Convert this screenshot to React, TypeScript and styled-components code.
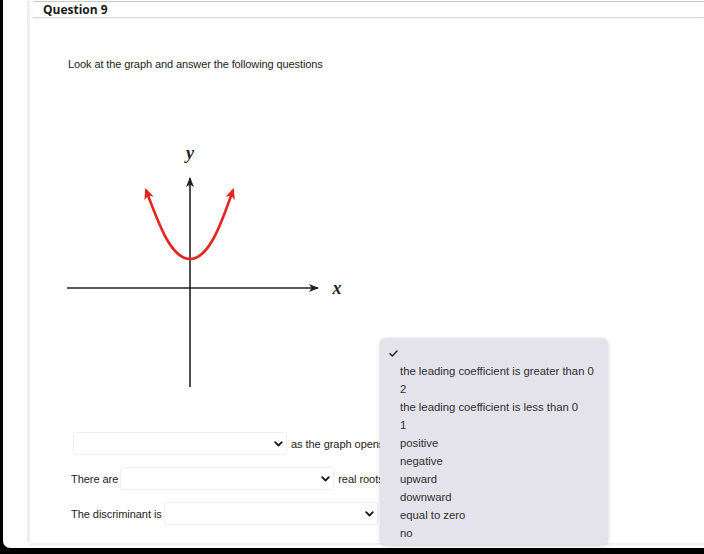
import React from "react";
import styled, { createGlobalStyle } from "styled-components";

const GlobalStyle = createGlobalStyle`
  html, body { margin: 0; padding: 0; background: #000; }
  body { width: 704px; height: 554px; overflow: hidden; }
  * { box-sizing: border-box; }
`;

const Screen = styled.div`
  position: relative;
  margin-left: 3px;
  width: 701px;
  height: 548px;
  background: #fff;
  border-bottom-left-radius: 7px;
  display: flex;
  overflow: hidden;
  padding-top: 1px;
`;

const Gutter = styled.div`
  width: 27px;
  flex: none;
  border-right: 3px solid #efefef;
  margin-bottom: 6px;
`;

const Main = styled.div`
  flex: 1;
  display: flex;
  flex-direction: column;
  border-bottom: 2px solid #f1f1f1;
  margin-bottom: 3px;
`;

const Header = styled.div`
  margin-left: 3px;
  height: 17px;
  border-top: 1px solid #c9c9c9;
  border-bottom: 1px solid #d6d6d6;
  box-shadow: 0 2px 3px rgba(0, 0, 0, 0.04);
  padding-left: 10px;
  display: flex;
  align-items: center;
  font-family: "Open Sans", "Liberation Sans", sans-serif;
  font-weight: 700;
  font-size: 12px;
  color: #1a1a1a;
`;

const Body = styled.div`
  padding: 39px 0 0 30px;
  font-family: "Liberation Sans", Arial, sans-serif;
  font-size: 11px;
  color: #222;
`;

const Instruction = styled.p`
  margin: 0 0 0 8px;
  line-height: 14px;
  letter-spacing: -0.1px;
`;

const Graph = styled.svg`
  display: block;
  margin-top: 69px;
`;

const Rows = styled.div`
  margin-top: 32px;
  margin-left: 11px;
  display: flex;
  flex-direction: column;
  gap: 12px;
`;

const Row = styled.div<{ $indent?: number }>`
  display: flex;
  align-items: center;
  gap: 2px;
  height: 23px;
  white-space: nowrap;
  padding-left: ${(p) => p.$indent ?? 0}px;
`;

const Label = styled.span`
  line-height: 14px;
  letter-spacing: -0.05px;
`;

const Select = styled.div`
  width: 214px;
  height: 23px;
  flex: none;
  background: #fff;
  border: 1px solid #efefef;
  border-radius: 3px;
  display: flex;
  align-items: center;
  justify-content: flex-end;
  padding-right: 3px;
  margin-right: 2px;
`;

const Menu = styled.div`
  position: absolute;
  left: 377px;
  top: 338px;
  width: 228px;
  height: 207px;
  background: #e4e3ec;
  border-radius: 6px;
  box-shadow: 0 1px 4px rgba(0, 0, 0, 0.18);
  padding: 6px 0 3px 0;
  font-family: "Liberation Sans", Arial, sans-serif;
  font-size: 11.3px;
  color: #2e2e2e;
`;

const MenuItem = styled.div`
  height: 18px;
  display: flex;
  align-items: center;
  padding-left: 20px;
  position: relative;
  white-space: nowrap;
`;

const Check = styled.svg`
  position: absolute;
  left: 9px;
  top: 6px;
`;

const Chevron = () => (
  <svg width="9" height="6" viewBox="0 0 9 6">
    <path d="M1.2 1.2 L4.5 4.5 L7.8 1.2" fill="none" stroke="#1b1b1b" strokeWidth="1.8" strokeLinecap="round" strokeLinejoin="round" />
  </svg>
);

const options = [
  "",
  "the leading coefficient is greater than 0",
  "2",
  "the leading coefficient is less than 0",
  "1",
  "positive",
  "negative",
  "upward",
  "downward",
  "equal to zero",
  "no",
];

export default function App() {
  return (
    <>
      <GlobalStyle />
      <Screen>
        <Gutter />
        <Main>
          <Header>Question 9</Header>
          <Body>
            <Instruction>Look at the graph and answer the following questions</Instruction>
            <Graph width="300" height="260" viewBox="60 140 300 260">
              <defs>
                <marker id="ax" viewBox="0 0 10 10" refX="9" refY="5" markerWidth="10" markerHeight="10" markerUnits="userSpaceOnUse" orient="auto">
                  <path d="M0 1 L10 5 L0 9 L2.5 5 Z" fill="#222" />
                </marker>
                <marker id="rd" viewBox="0 0 10 10" refX="8" refY="5" markerWidth="11" markerHeight="11" markerUnits="userSpaceOnUse" orient="auto-start-reverse">
                  <path d="M0 0.5 L10 5 L0 9.5 L2.5 5 Z" fill="#e3261f" />
                </marker>
              </defs>
              <line x1="190" y1="387" x2="190" y2="178" stroke="#222" strokeWidth="1.6" markerEnd="url(#ax)" />
              <line x1="67" y1="288" x2="318" y2="288" stroke="#222" strokeWidth="1.6" markerEnd="url(#ax)" />
              <path d="M146 190 C160 228 172 259 190 259 C208 259 220 228 233 190" fill="none" stroke="#e3261f" strokeWidth="2.6" markerStart="url(#rd)" markerEnd="url(#rd)" />
              <text x="190" y="159" textAnchor="middle" fontFamily="'Liberation Serif', 'DejaVu Serif', serif" fontStyle="italic" fontWeight="700" fontSize="18" fill="#222">y</text>
              <text x="337" y="294" textAnchor="middle" fontFamily="'Liberation Serif', 'DejaVu Serif', serif" fontStyle="italic" fontWeight="700" fontSize="18" fill="#222">x</text>
            </Graph>
            <Rows>
              <Row $indent={2}>
                <Select><Chevron /></Select>
                <Label>as the graph opens</Label>
              </Row>
              <Row>
                <Label>There are</Label>
                <Select><Chevron /></Select>
                <Label>real roots.</Label>
              </Row>
              <Row>
                <Label>The discriminant is</Label>
                <Select><Chevron /></Select>
              </Row>
            </Rows>
          </Body>
        </Main>
        <Menu>
          {options.map((o, i) => (
            <MenuItem key={i}>
              {i === 0 && (
                <Check width="9" height="7" viewBox="0 0 9 7">
                  <path d="M1 3.8 L3.3 6 L8 1" fill="none" stroke="#222" strokeWidth="1.5" strokeLinecap="round" strokeLinejoin="round" />
                </Check>
              )}
              {o}
            </MenuItem>
          ))}
        </Menu>
      </Screen>
    </>
  );
}
